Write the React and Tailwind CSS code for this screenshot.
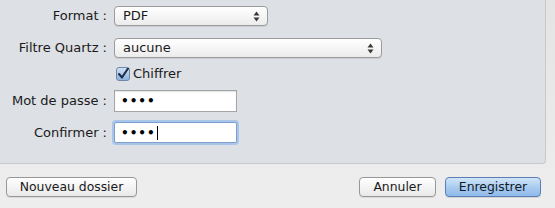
import React from 'react';

const font = { fontFamily: '"DejaVu Sans", "Liberation Sans", sans-serif' };

const Arrows = () => (
    <svg width="7" height="11" viewBox="0 0 7 11" className="shrink-0">
        <path d="M3.5 0.5 L6.5 4.5 L0.5 4.5 Z" fill="#3a3a3a" />
        <path d="M3.5 10.5 L6.5 6.5 L0.5 6.5 Z" fill="#3a3a3a" />
    </svg>
);

const Popup = ({ value, width }) => (
    <div
        className={`${width} h-[20px] flex items-center justify-between pl-[8px] pr-[7px] rounded-[4px] border border-[#9b9b9b] bg-gradient-to-b from-white to-[#ececec] shadow-[0_1px_0_rgba(0,0,0,0.08)] text-[13px] text-[#1a1a1a]`}
    >
        <span>{value}</span>
        <Arrows />
    </div>
);

const Row = ({ label, children, className = '' }) => (
    <div className={`flex items-center ${className}`}>
        <div className="w-[108px] text-right text-[13px] text-[#1a1a1a] pr-[1px]">{label}</div>
        <div className="ml-[6px]">{children}</div>
    </div>
);

const Dots = () => (
    <span className="tracking-[1px] text-[12px] font-bold text-black">••••</span>
);

export default function App() {
    return (
        <div className="w-[555px] h-[208px] bg-gradient-to-b from-[#e4e4e5] to-[#eeeeee] overflow-hidden" style={font}>
            <div className="w-[546px] h-[164px] bg-[#dde0e4] border-r border-b border-[#c6c8cb] rounded-br-[4px] pt-[6px]">
                <Row label="Format :">
                    <Popup value="PDF" width="w-[154px]" />
                </Row>
                <Row label="Filtre Quartz :" className="mt-[12px]">
                    <Popup value="aucune" width="w-[268px]" />
                </Row>
                <div className="flex items-center mt-[9px] ml-[116px] h-[14px]">
                    <div className="w-[14px] h-[14px] rounded-[3px] border border-[#6f86a8] bg-gradient-to-b from-[#cfe0f4] to-[#8db3e0] flex items-center justify-center">
                        <svg width="12" height="12" viewBox="0 0 12 12">
                            <path d="M2 6 L5 9.5 L11 0.5" fill="none" stroke="#1b2a45" strokeWidth="2" strokeLinecap="round" strokeLinejoin="round" />
                        </svg>
                    </div>
                    <span className="ml-[3px] text-[13px] text-[#1a1a1a]">Chiffrer</span>
                </div>
                <Row label="Mot de passe :" className="mt-[9px]">
                    <div className="w-[123px] h-[22px] border border-[#a5a5a5] bg-white flex items-center pl-[6px] shadow-[inset_0_1px_1px_rgba(0,0,0,0.12)]">
                        <Dots />
                    </div>
                </Row>
                <Row label="Confirmer :" className="mt-[10px]">
                    <div className="w-[123px] h-[21px] border border-[#7c9fce] bg-white flex items-center pl-[6px] rounded-[2px] shadow-[0_0_0_2px_#a9c6ea]">
                        <Dots />
                        <span className="ml-[1px] w-[1px] h-[14px] bg-black" />
                    </div>
                </Row>
            </div>
            <div className="flex items-center px-[6px] pt-[13px]">
                <button className="w-[131px] h-[20px] rounded-[4px] border border-[#979797] bg-gradient-to-b from-white to-[#e9e9e9] text-[12.4px] text-[#1a1a1a] shadow-[0_1px_0_rgba(0,0,0,0.08)]">
                    Nouveau dossier
                </button>
                <div className="flex-1" />
                <button className="w-[77px] h-[20px] rounded-[4px] border border-[#979797] bg-gradient-to-b from-white to-[#e9e9e9] text-[12.4px] text-[#1a1a1a] shadow-[0_1px_0_rgba(0,0,0,0.08)]">
                    Annuler
                </button>
                <button className="ml-[9px] mr-[8px] w-[96px] h-[20px] rounded-[4px] border border-[#5b7fb4] bg-gradient-to-b from-[#d2e5f8] via-[#a9ccef] to-[#8fbaea] text-[12.4px] text-[#101a2a] shadow-[0_1px_0_rgba(0,0,0,0.1)]">
                    Enregistrer
                </button>
            </div>
        </div>
    );
}
